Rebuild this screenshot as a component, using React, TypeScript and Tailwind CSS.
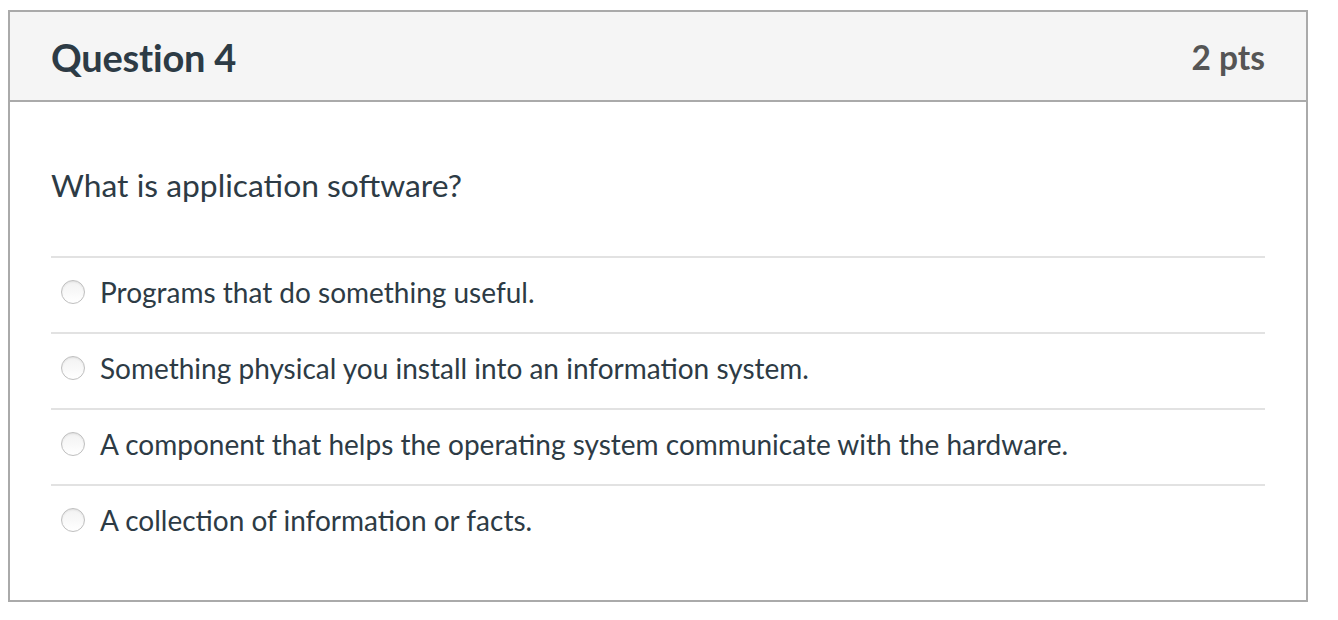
import { type JSX } from 'react';

const answers = [
  'Programs that do something useful.',
  'Something physical you install into an information system.',
  'A component that helps the operating system communicate with the hardware.',
  'A collection of information or facts.',
];

function Radio(): JSX.Element {
  return (
    <span className="block h-[24px] w-[24px] shrink-0 rounded-full border border-[#bfbfbf] bg-gradient-to-b from-[#f2f2f2] to-white shadow-[inset_0_1px_2px_rgba(0,0,0,0.08)]" />
  );
}

export default function App(): JSX.Element {
  return (
    <div className="min-h-[620px] bg-white pl-[8px] pt-[10px] font-['Lato','Noto_Sans',sans-serif] text-[#2d3b45]">
      <div className="w-[1300px] border-2 border-[#aaaaaa]">
        <div className="flex h-[90px] items-center justify-between border-b-2 border-[#aaaaaa] bg-[#f5f5f5] px-[41px] pt-[2px]">
          <h2 className="text-[38px] font-bold leading-[44px] tracking-[-0.2px]">Question 4</h2>
          <span className="text-[33.5px] font-bold leading-[44px] text-[#555555]">2 pts</span>
        </div>

        <div className="px-[41px] pb-[40px]">
          <p className="pb-[53px] pt-[65px] text-[31.8px] leading-[36px]">What is application software?</p>
          <ul>
            {answers.map((a) => (
              <li
                key={a}
                className="flex h-[76px] items-center gap-[15px] border-t-2 border-[#e2e2e2] pb-[7px] pl-[10px]"
              >
                <Radio />
                <span className="text-[28px] leading-[34px]">{a}</span>
              </li>
            ))}
          </ul>
        </div>
      </div>
    </div>
  );
}
